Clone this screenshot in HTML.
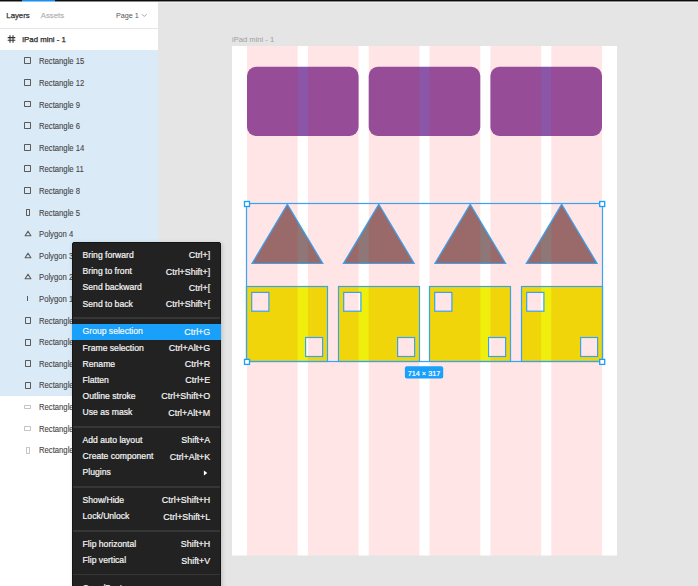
<!DOCTYPE html><html><head><meta charset="utf-8"><style>
*{margin:0;padding:0;box-sizing:border-box}
html,body{width:698px;height:586px;overflow:hidden;background:#e5e5e5;font-family:"Liberation Sans",sans-serif}
.a{position:absolute}
.t{position:absolute;white-space:nowrap;line-height:1}
.row{position:absolute;left:0;width:158px;height:21.6px}
.rt{position:absolute;left:38.8px;top:7.6px;font-size:8.3px;transform:scaleX(0.927);transform-origin:0 0;color:#444;-webkit-text-stroke:0.1px #444;white-space:nowrap;line-height:1}
.menu{position:absolute;left:72px;top:242px;width:149px;height:360px;background:#222;border:1px solid #141414;border-radius:2px;box-shadow:1px 1px 4px rgba(0,0,0,0.18)}
.mi{position:absolute;left:-1px;width:149px;height:16.2px}
.ml{position:absolute;left:10.6px;top:3.6px;font-size:8.6px;color:#f6f6f6;-webkit-text-stroke:0.2px #f6f6f6;white-space:nowrap;line-height:1}
.mr{position:absolute;right:10.8px;top:3.85px;font-size:8.9px;color:#f6f6f6;-webkit-text-stroke:0.2px #f6f6f6;white-space:nowrap;line-height:1}
.sep{position:absolute;left:0;width:147px;height:1.7px;background:#363636}
</style></head><body>
<svg class="a" style="left:0;top:0" width="698" height="586" viewBox="0 0 698 586"><rect x="0" y="0" width="698" height="586" fill="#e5e5e5"/><text x="232" y="42.4" font-family="Liberation Sans" font-size="7.6" fill="#9e9e9e">iPad mini - 1</text><rect x="232" y="46" width="385" height="509.5" fill="#fff"/><rect x="247.00" y="66.8" width="111.60" height="69.1" rx="9" fill="#8b55a8"/><rect x="368.70" y="66.8" width="111.60" height="69.1" rx="9" fill="#8b55a8"/><rect x="490.40" y="66.8" width="111.60" height="69.1" rx="9" fill="#8b55a8"/><path d="M287.40 204.2 L322.80 263.5 L252.00 263.5 Z" fill="#8f7777"/><path d="M378.83 204.2 L414.23 263.5 L343.43 263.5 Z" fill="#8f7777"/><path d="M470.26 204.2 L505.66 263.5 L434.86 263.5 Z" fill="#8f7777"/><path d="M561.69 204.2 L597.09 263.5 L526.29 263.5 Z" fill="#8f7777"/><rect x="246.5" y="286.5" width="81" height="75" fill="#efee0c"/><rect x="251.7" y="292.4" width="17.2" height="18.8" fill="#fff"/><rect x="305.6" y="337.5" width="17" height="19" fill="#fff"/><rect x="338.5" y="286.5" width="81" height="75" fill="#efee0c"/><rect x="343.7" y="292.4" width="17.2" height="18.8" fill="#fff"/><rect x="397.6" y="337.5" width="17" height="19" fill="#fff"/><rect x="429.5" y="286.5" width="81" height="75" fill="#efee0c"/><rect x="434.7" y="292.4" width="17.2" height="18.8" fill="#fff"/><rect x="488.6" y="337.5" width="17" height="19" fill="#fff"/><rect x="521.5" y="286.5" width="81" height="75" fill="#efee0c"/><rect x="526.7" y="292.4" width="17.2" height="18.8" fill="#fff"/><rect x="580.6" y="337.5" width="17" height="19" fill="#fff"/><rect x="247.00" y="46" width="50.75" height="509.5" fill="rgba(255,0,0,0.1)"/><rect x="307.85" y="46" width="50.75" height="509.5" fill="rgba(255,0,0,0.1)"/><rect x="368.70" y="46" width="50.75" height="509.5" fill="rgba(255,0,0,0.1)"/><rect x="429.55" y="46" width="50.75" height="509.5" fill="rgba(255,0,0,0.1)"/><rect x="490.40" y="46" width="50.75" height="509.5" fill="rgba(255,0,0,0.1)"/><rect x="551.25" y="46" width="50.75" height="509.5" fill="rgba(255,0,0,0.1)"/><path d="M287.40 204.2 L322.80 263.5 L252.00 263.5 Z" fill="none" stroke="#36a3f6" stroke-width="1.2"/><path d="M378.83 204.2 L414.23 263.5 L343.43 263.5 Z" fill="none" stroke="#36a3f6" stroke-width="1.2"/><path d="M470.26 204.2 L505.66 263.5 L434.86 263.5 Z" fill="none" stroke="#36a3f6" stroke-width="1.2"/><path d="M561.69 204.2 L597.09 263.5 L526.29 263.5 Z" fill="none" stroke="#36a3f6" stroke-width="1.2"/><rect x="246.5" y="286.5" width="81" height="75" fill="none" stroke="#36a3f6" stroke-width="1.2"/><rect x="251.7" y="292.4" width="17.2" height="18.8" fill="none" stroke="#36a3f6" stroke-width="1.2"/><rect x="305.6" y="337.5" width="17" height="19" fill="none" stroke="#36a3f6" stroke-width="1.2"/><rect x="338.5" y="286.5" width="81" height="75" fill="none" stroke="#36a3f6" stroke-width="1.2"/><rect x="343.7" y="292.4" width="17.2" height="18.8" fill="none" stroke="#36a3f6" stroke-width="1.2"/><rect x="397.6" y="337.5" width="17" height="19" fill="none" stroke="#36a3f6" stroke-width="1.2"/><rect x="429.5" y="286.5" width="81" height="75" fill="none" stroke="#36a3f6" stroke-width="1.2"/><rect x="434.7" y="292.4" width="17.2" height="18.8" fill="none" stroke="#36a3f6" stroke-width="1.2"/><rect x="488.6" y="337.5" width="17" height="19" fill="none" stroke="#36a3f6" stroke-width="1.2"/><rect x="521.5" y="286.5" width="81" height="75" fill="none" stroke="#36a3f6" stroke-width="1.2"/><rect x="526.7" y="292.4" width="17.2" height="18.8" fill="none" stroke="#36a3f6" stroke-width="1.2"/><rect x="580.6" y="337.5" width="17" height="19" fill="none" stroke="#36a3f6" stroke-width="1.2"/><rect x="246.5" y="203.5" width="356" height="158" fill="none" stroke="#36a3f6" stroke-width="1.2"/><rect x="244.5" y="201.5" width="5" height="5" fill="#fff" stroke="#18a0fb" stroke-width="1.3"/><rect x="599.7" y="201.5" width="5" height="5" fill="#fff" stroke="#18a0fb" stroke-width="1.3"/><rect x="244.5" y="359.4" width="5" height="5" fill="#fff" stroke="#18a0fb" stroke-width="1.3"/><rect x="599.7" y="359.4" width="5" height="5" fill="#fff" stroke="#18a0fb" stroke-width="1.3"/><rect x="404.9" y="366.2" width="38.3" height="12.2" rx="2" fill="#18a0fb"/><text x="424" y="375.8" text-anchor="middle" font-family="Liberation Sans" font-size="7.3" fill="#fff" stroke="#fff" stroke-width="0.2">714 × 317</text></svg>
<div class="a" style="left:0;top:0;width:158px;height:586px;background:#fff"></div>
<div class="a" style="left:0;top:0;width:698px;height:1px;background:#0d0d0d"></div>
<div class="a" style="left:0;top:1px;width:698px;height:1px;background:#8a8a8a"></div>
<div class="a" style="left:158px;top:2px;width:540px;height:1px;background:#f0f0f0"></div>
<div class="a" style="left:22px;top:0;width:33px;height:1px;background:#1b8ef0"></div>
<div class="a" style="left:22px;top:1px;width:33px;height:1px;background:#8cc6f5"></div>
<div class="t" style="left:6.3px;top:11.5px;font-size:7.8px;color:#333;-webkit-text-stroke:0.25px #333">Layers</div>
<div class="t" style="left:40.7px;top:11.5px;font-size:7.8px;color:#b8b8b8;-webkit-text-stroke:0.25px #b8b8b8">Assets</div>
<div class="t" style="left:115.6px;top:11.6px;font-size:8px;transform:scaleX(0.9);transform-origin:0 0;color:#555">Page 1</div>
<svg class="a" style="left:141px;top:13px" width="7" height="5" viewBox="0 0 7 5"><path d="M1 1.2 L3.3 3.5 L5.6 1.2" fill="none" stroke="#9a9a9a" stroke-width="0.9"/></svg>
<div class="a" style="left:0;top:28px;width:158px;height:1px;background:#e6e6e6"></div>
<svg class="a" style="left:7px;top:35px" width="9" height="8" viewBox="0 0 9 8"><path d="M3 0.3V7.7M6 0.3V7.7M0.7 2.6H8.3M0.7 5.3H8.3" stroke="#333" stroke-width="1.1" fill="none"/></svg>
<div class="t" style="left:22.3px;top:36.1px;font-size:7.85px;color:#2a2a2a;-webkit-text-stroke:0.25px #2a2a2a">iPad mini - 1</div>
<div class="a" style="left:0;top:49.8px;width:158px;height:346px;background:#daeaf7"></div>
<div class="row" style="top:49.80px">
<div class="a" style="left:24.4px;top:7.6px;width:6.8px;height:6.8px;border:1.1px solid #5a5a5a;border-radius:0.8px"></div>
<div class="rt">Rectangle 15</div></div>
<div class="row" style="top:71.40px">
<div class="a" style="left:24.4px;top:7.6px;width:6.8px;height:6.8px;border:1.1px solid #5a5a5a;border-radius:0.8px"></div>
<div class="rt">Rectangle 12</div></div>
<div class="row" style="top:93.00px">
<div class="a" style="left:24.4px;top:7.6px;width:6.8px;height:6.8px;border:1.1px solid #5a5a5a;border-radius:0.8px"></div>
<div class="rt">Rectangle 9</div></div>
<div class="row" style="top:114.60px">
<div class="a" style="left:24.4px;top:7.6px;width:6.8px;height:6.8px;border:1.1px solid #5a5a5a;border-radius:0.8px"></div>
<div class="rt">Rectangle 6</div></div>
<div class="row" style="top:136.20px">
<div class="a" style="left:24.4px;top:7.6px;width:6.8px;height:6.8px;border:1.1px solid #5a5a5a;border-radius:0.8px"></div>
<div class="rt">Rectangle 14</div></div>
<div class="row" style="top:157.80px">
<div class="a" style="left:24.4px;top:7.6px;width:6.8px;height:6.8px;border:1.1px solid #5a5a5a;border-radius:0.8px"></div>
<div class="rt">Rectangle 11</div></div>
<div class="row" style="top:179.40px">
<div class="a" style="left:24.4px;top:7.6px;width:6.8px;height:6.8px;border:1.1px solid #5a5a5a;border-radius:0.8px"></div>
<div class="rt">Rectangle 8</div></div>
<div class="row" style="top:201.00px">
<div class="a" style="left:25.8px;top:8px;width:4px;height:7px;border:1.1px solid #5a5a5a;border-radius:0.8px"></div>
<div class="rt">Rectangle 5</div></div>
<div class="row" style="top:222.60px">
<svg class="a" style="left:24px;top:7.4px" width="8" height="7" viewBox="0 0 8 7"><path d="M4 1.2 L6.9 5.8 L1.1 5.8 Z" fill="none" stroke="#5a5a5a" stroke-width="1.1" stroke-linejoin="round"/></svg>
<div class="rt">Polygon 4</div></div>
<div class="row" style="top:244.20px">
<svg class="a" style="left:24px;top:7.4px" width="8" height="7" viewBox="0 0 8 7"><path d="M4 1.2 L6.9 5.8 L1.1 5.8 Z" fill="none" stroke="#5a5a5a" stroke-width="1.1" stroke-linejoin="round"/></svg>
<div class="rt">Polygon 3</div></div>
<div class="row" style="top:265.80px">
<svg class="a" style="left:24px;top:7.4px" width="8" height="7" viewBox="0 0 8 7"><path d="M4 1.2 L6.9 5.8 L1.1 5.8 Z" fill="none" stroke="#5a5a5a" stroke-width="1.1" stroke-linejoin="round"/></svg>
<div class="rt">Polygon 2</div></div>
<div class="row" style="top:287.40px">
<div class="a" style="left:27.1px;top:8.4px;width:1.3px;height:5px;background:#5a5a5a"></div>
<div class="rt">Polygon 1</div></div>
<div class="row" style="top:309.00px">
<div class="a" style="left:25px;top:8px;width:6px;height:7px;border:1.1px solid #5a5a5a;border-radius:0.8px"></div>
<div class="rt">Rectangle 13</div></div>
<div class="row" style="top:330.60px">
<div class="a" style="left:25px;top:8px;width:6px;height:7px;border:1.1px solid #5a5a5a;border-radius:0.8px"></div>
<div class="rt">Rectangle 10</div></div>
<div class="row" style="top:352.20px">
<div class="a" style="left:25px;top:8px;width:6px;height:7px;border:1.1px solid #5a5a5a;border-radius:0.8px"></div>
<div class="rt">Rectangle 7</div></div>
<div class="row" style="top:373.80px">
<div class="a" style="left:25px;top:8px;width:6px;height:7px;border:1.1px solid #5a5a5a;border-radius:0.8px"></div>
<div class="rt">Rectangle 4</div></div>
<div class="row" style="top:395.40px">
<div class="a" style="left:24.2px;top:9.2px;width:7px;height:4.6px;border:1.1px solid #c4c4c4;border-radius:0.8px"></div>
<div class="rt">Rectangle 3</div></div>
<div class="row" style="top:417.00px">
<div class="a" style="left:24.2px;top:9.2px;width:7px;height:4.6px;border:1.1px solid #c4c4c4;border-radius:0.8px"></div>
<div class="rt">Rectangle 2</div></div>
<div class="row" style="top:438.60px">
<div class="a" style="left:25.8px;top:8px;width:4px;height:7px;border:1.1px solid #c4c4c4;border-radius:0.8px"></div>
<div class="rt">Rectangle 1</div></div>
<div class="menu">
<div class="mi" style="top:4.50px;"><div class="ml">Bring forward</div>
<div class="mr">Ctrl+]</div>
</div>
<div class="mi" style="top:20.70px;"><div class="ml">Bring to front</div>
<div class="mr">Ctrl+Shift+]</div>
</div>
<div class="mi" style="top:36.90px;"><div class="ml">Send backward</div>
<div class="mr">Ctrl+[</div>
</div>
<div class="mi" style="top:53.10px;"><div class="ml">Send to back</div>
<div class="mr">Ctrl+Shift+[</div>
</div>
<div class="sep" style="top:74.20px"></div>
<div class="mi" style="top:80.80px;background:#18a0fb;"><div class="ml">Group selection</div>
<div class="mr">Ctrl+G</div>
</div>
<div class="mi" style="top:97.00px;"><div class="ml">Frame selection</div>
<div class="mr">Ctrl+Alt+G</div>
</div>
<div class="mi" style="top:113.20px;"><div class="ml">Rename</div>
<div class="mr">Ctrl+R</div>
</div>
<div class="mi" style="top:129.40px;"><div class="ml">Flatten</div>
<div class="mr">Ctrl+E</div>
</div>
<div class="mi" style="top:145.60px;"><div class="ml">Outline stroke</div>
<div class="mr">Ctrl+Shift+O</div>
</div>
<div class="mi" style="top:161.80px;"><div class="ml">Use as mask</div>
<div class="mr">Ctrl+Alt+M</div>
</div>
<div class="sep" style="top:182.90px"></div>
<div class="mi" style="top:189.50px;"><div class="ml">Add auto layout</div>
<div class="mr">Shift+A</div>
</div>
<div class="mi" style="top:205.70px;"><div class="ml">Create component</div>
<div class="mr">Ctrl+Alt+K</div>
</div>
<div class="mi" style="top:221.90px;"><div class="ml">Plugins</div>
<svg class="a" style="left:130.5px;top:5.4px" width="5" height="6" viewBox="0 0 5 6"><path d="M0.9 0.6 L4.3 3 L0.9 5.4 Z" fill="#fff"/></svg>
</div>
<div class="sep" style="top:243.00px"></div>
<div class="mi" style="top:249.60px;"><div class="ml">Show/Hide</div>
<div class="mr">Ctrl+Shift+H</div>
</div>
<div class="mi" style="top:265.80px;"><div class="ml">Lock/Unlock</div>
<div class="mr">Ctrl+Shift+L</div>
</div>
<div class="sep" style="top:286.90px"></div>
<div class="mi" style="top:293.50px;"><div class="ml">Flip horizontal</div>
<div class="mr">Shift+H</div>
</div>
<div class="mi" style="top:309.70px;"><div class="ml">Flip vertical</div>
<div class="mr">Shift+V</div>
</div>
<div class="sep" style="top:330.80px"></div>
<div class="mi" style="top:337.40px;"><div class="ml">Copy/Paste as</div>
</div>
</div>
</body></html>
